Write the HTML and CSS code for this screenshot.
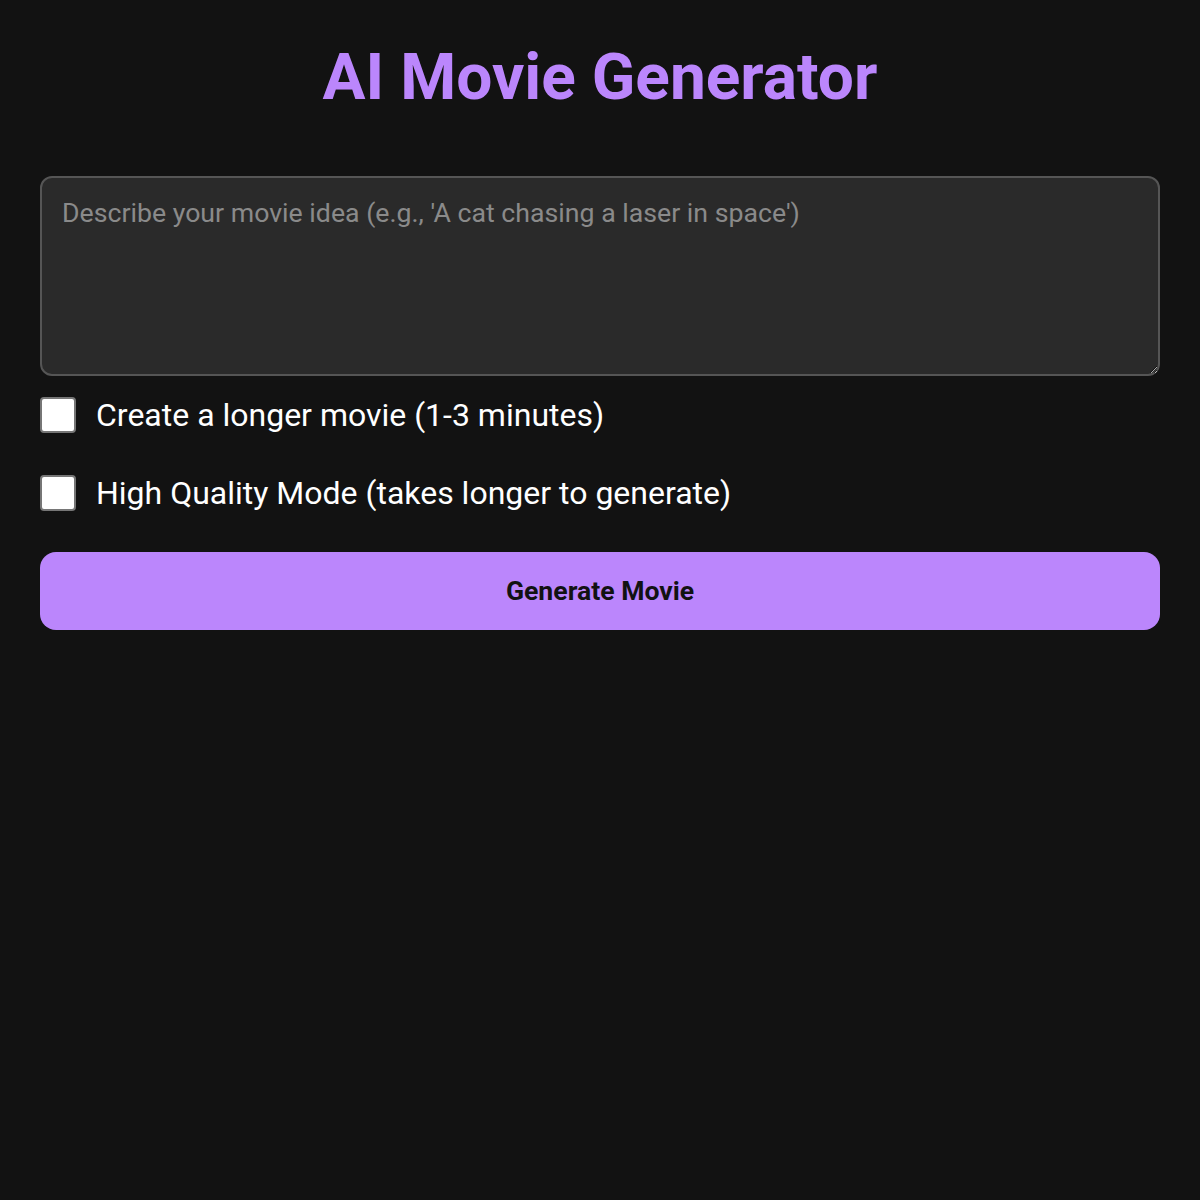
FILE: index.html
```html
<!DOCTYPE html>
<html lang="en">
<head>
  <meta charset="UTF-8" />
  <meta name="viewport" content="width=device-width, initial-scale=1.0" />
  <title>AI Movie Generator</title>
  <link rel="stylesheet" href="styles.css">
</head>
<body>

  <div class="app">
    <h1>AI Movie Generator</h1>
    <form id="movieForm" onsubmit="event.preventDefault();">
      <textarea id="prompt" placeholder="Describe your movie idea (e.g., 'A cat chasing a laser in space')"></textarea>

      <label class="option">
        <input type="checkbox" id="longMovie">
        <span>Create a longer movie (1-3 minutes)</span>
      </label>

      <label class="option">
        <input type="checkbox" id="highQuality">
        <span>High Quality Mode (takes longer to generate)</span>
      </label>

      <button type="submit">Generate Movie</button>
    </form>
  </div>

</body>
</html>
```

FILE: styles.css
```css
body {
  font-family: Roboto, "Liberation Sans", Arial, sans-serif;
  background-color: #121212;
  color: #ffffff;
  margin: 0;
  padding: 0;
}

.app {
  padding: 40px 40px;
}

h1 {
  color: #bb86fc;
  font-size: 64px;
  font-weight: 700;
  text-align: center;
  margin: 0 0 59px;
  line-height: 1.2;
}

form {
  display: flex;
  flex-direction: column;
}

textarea {
  display: block;
  width: 100%;
  height: 200px;
  padding: 19px 20px 20px;
  border: 2px solid #555555;
  border-radius: 12px;
  background-color: #2a2a2a;
  color: #ffffff;
  font-family: inherit;
  font-size: 26.7px;
  line-height: 1.2;
  box-sizing: border-box;
  resize: vertical;
}

textarea::placeholder {
  color: #8a8a8a;
}

.option {
  display: flex;
  align-items: center;
  gap: 20px;
  font-size: 32px;
  line-height: 36px;
  margin-top: 21px;
}

.option + .option {
  margin-top: 42px;
}

.option input {
  appearance: none;
  width: 36px;
  height: 36px;
  margin: 0;
  background-color: #ffffff;
  border: 2px solid #767676;
  border-radius: 4px;
  flex-shrink: 0;
}

button {
  margin-top: 41px;
  height: 78px;
  border: none;
  border-radius: 16px;
  background-color: #bb86fc;
  color: #121212;
  font-family: inherit;
  font-size: 26.6px;
  font-weight: 700;
  cursor: pointer;
}
```
